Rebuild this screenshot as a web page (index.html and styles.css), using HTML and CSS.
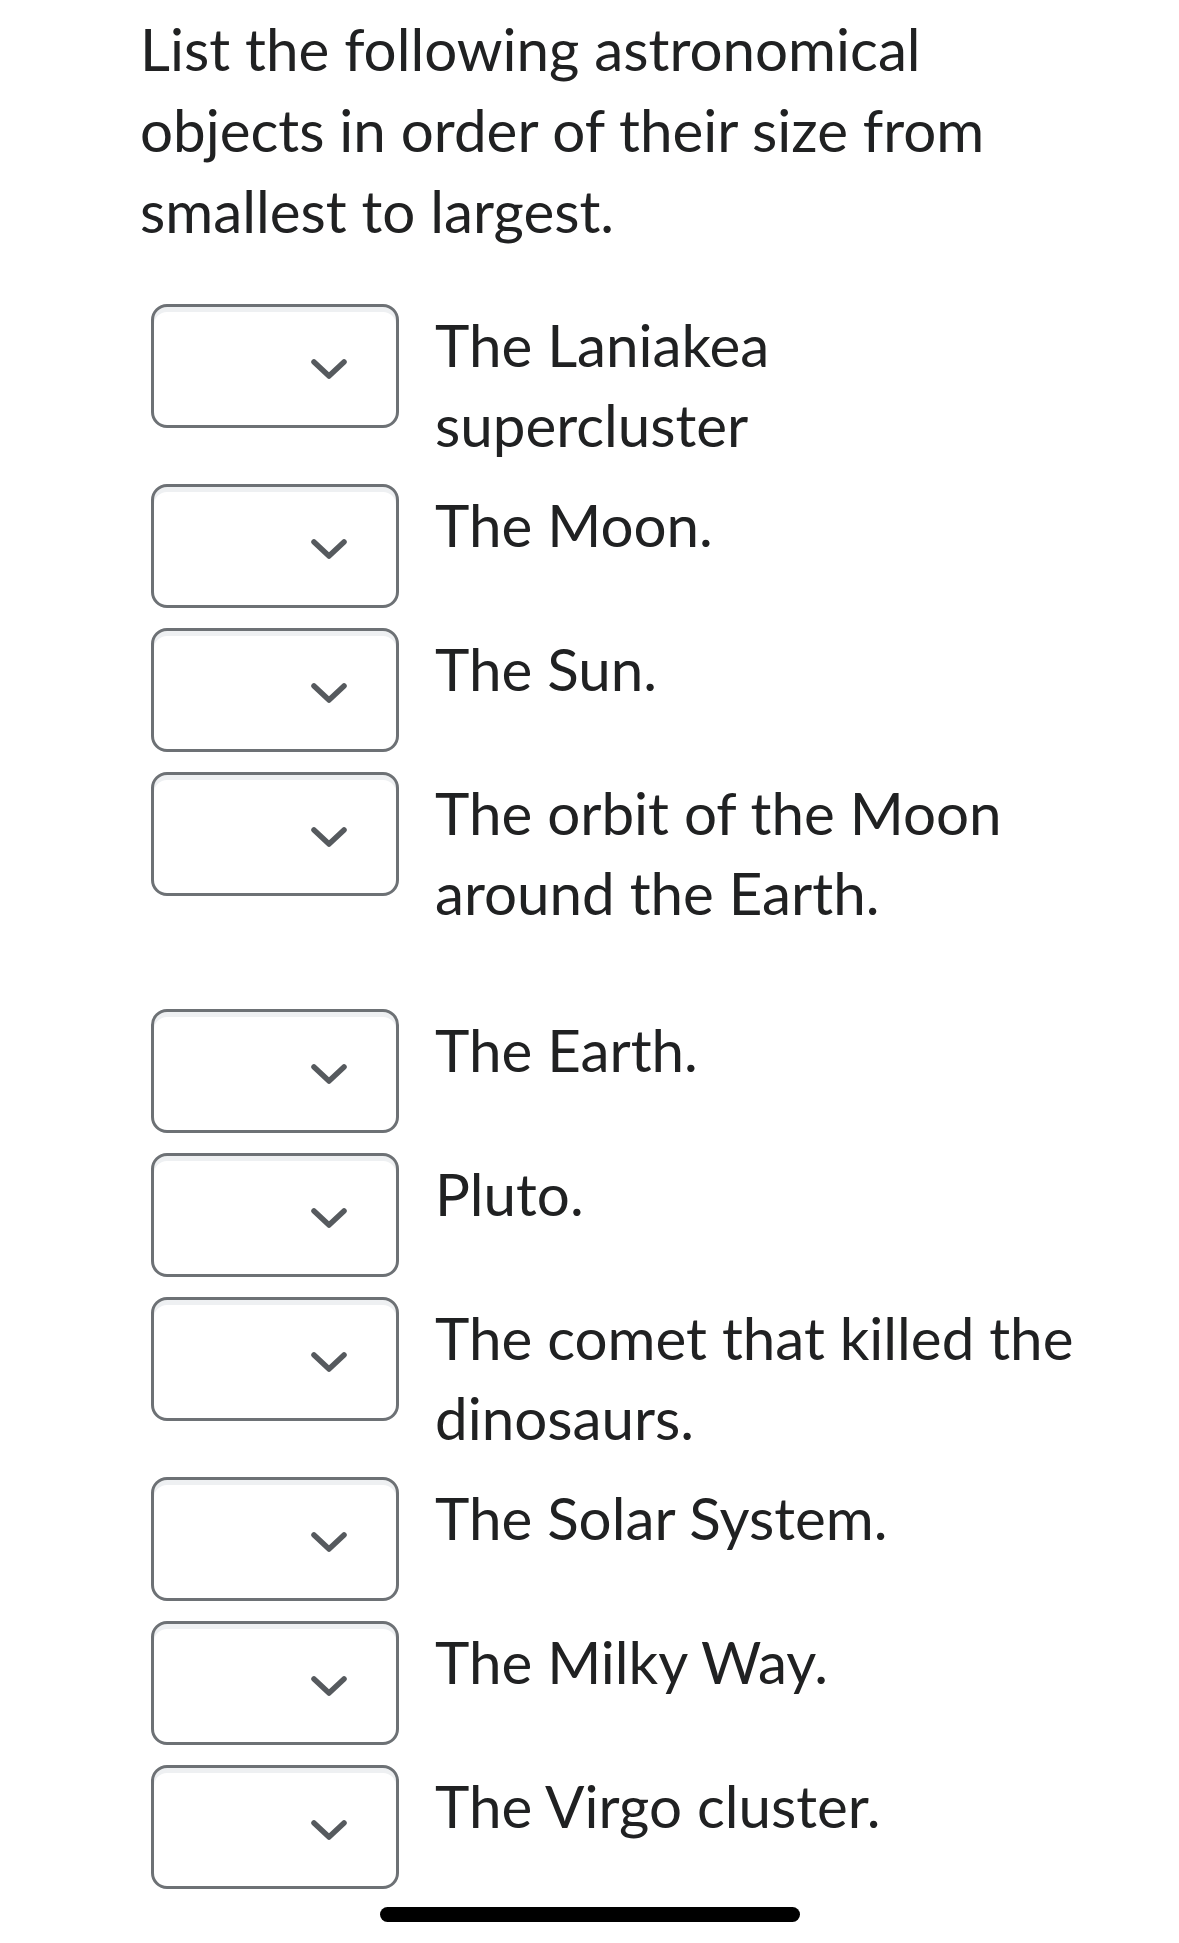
FILE: index.html
```html
<!DOCTYPE html>
<html lang="en">
<head>
    <meta charset="UTF-8">
    <meta name="viewport" content="width=device-width, initial-scale=1.0">
    <title>Ordering question</title>
    <link rel="stylesheet" href="styles.css">
</head>
<body>
    <div id="question">
        <p class="prompt">List the following astronomical objects in order of their size from smallest to largest.</p>

        <ul class="answers">
            <li class="answer-row">
                <div class="select"><svg class="chevron" viewBox="0 0 40 24"><polyline points="5,5 20,19 35,5"/></svg></div>
                <span class="answer-text">The Laniakea supercluster</span>
            </li>
            <li class="answer-row">
                <div class="select"><svg class="chevron" viewBox="0 0 40 24"><polyline points="5,5 20,19 35,5"/></svg></div>
                <span class="answer-text">The Moon.</span>
            </li>
            <li class="answer-row">
                <div class="select"><svg class="chevron" viewBox="0 0 40 24"><polyline points="5,5 20,19 35,5"/></svg></div>
                <span class="answer-text">The Sun.</span>
            </li>
            <li class="answer-row spaced">
                <div class="select"><svg class="chevron" viewBox="0 0 40 24"><polyline points="5,5 20,19 35,5"/></svg></div>
                <span class="answer-text">The orbit of the Moon around the Earth.</span>
            </li>
            <li class="answer-row">
                <div class="select"><svg class="chevron" viewBox="0 0 40 24"><polyline points="5,5 20,19 35,5"/></svg></div>
                <span class="answer-text">The Earth.</span>
            </li>
            <li class="answer-row">
                <div class="select"><svg class="chevron" viewBox="0 0 40 24"><polyline points="5,5 20,19 35,5"/></svg></div>
                <span class="answer-text">Pluto.</span>
            </li>
            <li class="answer-row">
                <div class="select"><svg class="chevron" viewBox="0 0 40 24"><polyline points="5,5 20,19 35,5"/></svg></div>
                <span class="answer-text">The comet that killed the dinosaurs.</span>
            </li>
            <li class="answer-row">
                <div class="select"><svg class="chevron" viewBox="0 0 40 24"><polyline points="5,5 20,19 35,5"/></svg></div>
                <span class="answer-text">The Solar System.</span>
            </li>
            <li class="answer-row">
                <div class="select"><svg class="chevron" viewBox="0 0 40 24"><polyline points="5,5 20,19 35,5"/></svg></div>
                <span class="answer-text">The Milky Way.</span>
            </li>
            <li class="answer-row">
                <div class="select"><svg class="chevron" viewBox="0 0 40 24"><polyline points="5,5 20,19 35,5"/></svg></div>
                <span class="answer-text">The Virgo cluster.</span>
            </li>
        </ul>
    </div>

    <div class="home-bar"></div>
</body>
</html>
```

FILE: styles.css
```css
body {
    margin: 0;
    background: #fff;
    font-family: Lato, "Open Sans", sans-serif;
    color: #202122;
}

#question {
    padding: 8px 0 0 140px;
}

.prompt {
    margin: 0 0 53px 0;
    width: 900px;
    font-size: 58.3px;
    line-height: 81px;
}

.answers {
    list-style: none;
    margin: 0;
    padding: 0;
}

.answer-row {
    display: flex;
    align-items: flex-start;
    gap: 36px;
    margin-bottom: 20px;
    padding-left: 11px;
}

/* the orbit row has extra room below it */
.answer-row.spaced {
    margin-bottom: 77px;
}

.select {
    box-sizing: border-box;
    flex: 0 0 248px;
    height: 124px;
    border: 3px solid #6d7175;
    border-radius: 16px;
    background: #fff;
    box-shadow: inset 0 5px 0 #eef0f2;
    display: flex;
    align-items: center;
    justify-content: flex-end;
    padding: 6px 47px 0 0;
}

.chevron {
    width: 40px;
    height: 24px;
    fill: none;
    stroke: #565a5e;
    stroke-width: 5.5;
    stroke-linecap: round;
    stroke-linejoin: round;
}

.answer-text {
    width: 655px;
    font-size: 58.3px;
    line-height: 80px;
}

.home-bar {
    position: fixed;
    left: 50%;
    bottom: 21px;
    width: 420px;
    height: 15px;
    margin-left: -210px;
    border-radius: 8px;
    background: #000;
}
```
